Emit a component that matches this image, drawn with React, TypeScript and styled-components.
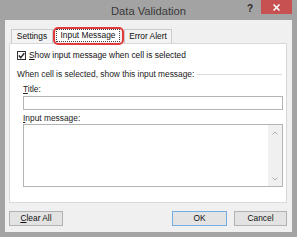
import React from "react";
import styled, { createGlobalStyle } from "styled-components";

const Global = createGlobalStyle`
  html, body { margin: 0; padding: 0; }
  body {
    width: 300px;
    height: 240px;
    overflow: hidden;
    background: #ffffff;
    font-family: "Liberation Sans", Arial, sans-serif;
  }
`;

const Screen = styled.div`
  width: 300px;
  height: 240px;
  background: #ffffff;
`;

const Window = styled.div`
  width: 297px;
  height: 237px;
  background: #a3a3a3;
  display: flex;
  flex-direction: column;
`;

const TitleBar = styled.div`
  height: 20px;
  flex: none;
  display: grid;
  grid-template-columns: 1fr auto 1fr;
  align-items: start;
  padding-right: 5px;
  padding-left: 5px;
`;

const Title = styled.div`
  grid-column: 2;
  font-size: 11.2px;
  line-height: 12px;
  margin-top: 5px;
  color: #3a3a3a;
  white-space: nowrap;
`;

const Controls = styled.div`
  grid-column: 3;
  justify-self: end;
  display: flex;
  align-items: flex-start;
`;

const Help = styled.div`
  font-size: 10px;
  font-weight: bold;
  line-height: 10px;
  color: #2a2a2a;
  margin-top: 4px;
  margin-right: 8px;
`;

const CloseBtn = styled.div`
  width: 31px;
  height: 14px;
  background: #c75050;
  display: flex;
  align-items: center;
  justify-content: center;
`;

const Body = styled.div`
  flex: 1;
  margin: 0 5px 5px 5px;
  background: #f0f0f0;
  padding: 7px 5px 6px 4px;
  display: flex;
  flex-direction: column;
`;

const TabStrip = styled.div`
  height: 16px;
  flex: none;
  display: flex;
  align-items: flex-end;
  padding-left: 2px;
`;

const Tab = styled.div<{ $w: number }>`
  width: ${(p) => p.$w}px;
  height: 14px;
  box-sizing: border-box;
  border: 1px solid #cbcbcb;
  border-bottom: none;
  background: #f3f3f3;
  font-size: 8.4px;
  line-height: 13px;
  text-align: center;
  color: #111;
`;

const Ring = styled.div`
  width: 71px;
  height: 18px;
  box-sizing: border-box;
  border: 2px solid #e23a3a;
  border-radius: 5px;
  margin-bottom: -2px;
  position: relative;
  z-index: 1;
  padding: 0 2px 1px 1px;
  display: flex;
`;

const ActiveTab = styled.div`
  flex: 1;
  background: #ffffff;
  border: 1px dotted #444;
  font-size: 8.4px;
  line-height: 11px;
  text-align: center;
  color: #111;
`;

const Panel = styled.div`
  flex: 1;
  background: #ffffff;
  border: 1px solid #d9d9d9;
  padding: 6px 3px 0 7px;
  display: flex;
  flex-direction: column;
`;

const CheckRow = styled.div`
  height: 10px;
  display: flex;
  align-items: center;
  gap: 3px;
  font-size: 8.4px;
  color: #111;
`;

const Box = styled.div`
  width: 9px;
  height: 9px;
  box-sizing: border-box;
  border: 1px solid #333;
  background: #fff;
  display: flex;
  align-items: center;
  justify-content: center;
`;

const GroupHeader = styled.div`
  margin-top: 9px;
  height: 10px;
  display: flex;
  align-items: center;
  font-size: 8.4px;
  color: #222;
  white-space: nowrap;
`;

const Rule = styled.div`
  flex: 1;
  height: 1px;
  background: #dcdcdc;
  margin: 0 1px 0 3px;
`;

const Section = styled.div`
  padding-left: 6px;
  display: flex;
  flex-direction: column;
`;

const Label = styled.div<{ $top: number }>`
  margin-top: ${(p) => p.$top}px;
  height: 10px;
  line-height: 10px;
  font-size: 8.4px;
  color: #222;
`;

const TextInput = styled.div`
  margin-top: 2px;
  height: 14px;
  box-sizing: border-box;
  border: 1px solid #b4b4b4;
  background: #fff;
`;

const TextArea = styled.div`
  margin-top: 1px;
  height: 63px;
  box-sizing: border-box;
  border: 1px solid #b4b4b4;
  background: #fff;
  display: flex;
  justify-content: flex-end;
`;

const ScrollBar = styled.div`
  width: 14px;
  background: #f0f0f0;
  display: flex;
  flex-direction: column;
  justify-content: space-between;
  align-items: center;
  padding: 6px 0 5px;
`;

const ButtonRow = styled.div`
  margin-top: 8px;
  height: 15px;
  flex: none;
  display: flex;
  gap: 7px;
`;

const Button = styled.div<{ $w: number; $focus?: boolean }>`
  width: ${(p) => p.$w}px;
  height: 15px;
  box-sizing: border-box;
  border: 1px solid ${(p) => (p.$focus ? "#74ace6" : "#b2b2b2")};
  background: #e3e3e3;
  font-size: 8.4px;
  line-height: 13px;
  text-align: center;
  color: #111;
`;

const Spacer = styled.div`
  flex: 1;
`;

const U = styled.span`
  text-decoration: underline;
  text-underline-offset: 1px;
`;

const Chevron = ({ up }: { up?: boolean }) => (
  <svg width="6" height="4" viewBox="0 0 6 4">
    <path
      d={up ? "M0.5 3.5 L3 1 L5.5 3.5" : "M0.5 0.5 L3 3 L5.5 0.5"}
      fill="none"
      stroke="#b0b0b0"
      strokeWidth="1"
    />
  </svg>
);

export default function App() {
  return (
    <Screen>
      <Global />
      <Window>
        <TitleBar>
          <Title>Data Validation</Title>
          <Controls>
            <Help>?</Help>
            <CloseBtn>
              <svg width="7" height="7" viewBox="0 0 7 7">
                <path d="M0.5 0.5 L6.5 6.5 M6.5 0.5 L0.5 6.5" stroke="#fff" strokeWidth="1.5" />
              </svg>
            </CloseBtn>
          </Controls>
        </TitleBar>
        <Body>
          <TabStrip>
            <Tab $w={42}>Settings</Tab>
            <Ring>
              <ActiveTab>Input Message</ActiveTab>
            </Ring>
            <Tab $w={48}>Error Alert</Tab>
          </TabStrip>
          <Panel>
            <CheckRow>
              <Box>
                <svg width="7" height="7" viewBox="0 0 7 7">
                  <path d="M0.8 3.6 L2.7 5.6 L6.3 1.2" fill="none" stroke="#222" strokeWidth="1.4" />
                </svg>
              </Box>
              <span>
                <U>S</U>how input message when cell is selected
              </span>
            </CheckRow>
            <GroupHeader>
              When cell is selected, show this input message:
              <Rule />
            </GroupHeader>
            <Section>
              <Label $top={5}>
                <U>T</U>itle:
              </Label>
              <TextInput />
              <Label $top={3}>
                <U>I</U>nput message:
              </Label>
              <TextArea>
                <ScrollBar>
                  <Chevron up />
                  <Chevron />
                </ScrollBar>
              </TextArea>
            </Section>
          </Panel>
          <ButtonRow>
            <Button $w={54}>
              <U>C</U>lear All
            </Button>
            <Spacer />
            <Button $w={55} $focus>
              OK
            </Button>
            <Button $w={53}>Cancel</Button>
          </ButtonRow>
        </Body>
      </Window>
    </Screen>
  );
}
